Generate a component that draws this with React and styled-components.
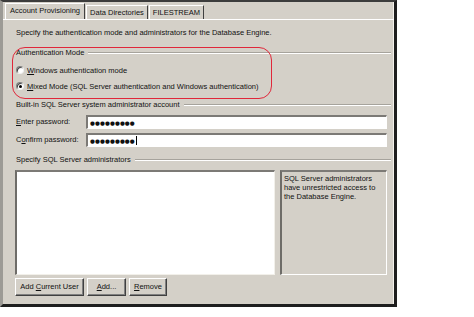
import React from 'react';
import styled, { createGlobalStyle } from 'styled-components';

const Global = createGlobalStyle`
  html, body {
    margin: 0;
    padding: 0;
    background: #ffffff;
  }
  body {
    font-family: "Liberation Sans", Arial, sans-serif;
    font-size: 7.5px;
    color: #111;
  }
  * { box-sizing: border-box; }
`;

const Window = styled.div`
  position: relative;
  width: 397px;
  height: 307px;
  background: #d4d0c8;
  border-left: 3px solid #9c9a95;
  border-top: 2px solid #3c3c3c;
  border-right: 3px solid #1e1e1e;
  border-bottom: 3px solid #1e1e1e;
  box-shadow: inset -1px 0 0 #f4f2ec;
  display: flex;
  flex-direction: column;
`;

const TabStrip = styled.div`
  display: flex;
  align-items: flex-end;
  height: 17px;
  padding-left: 2px;
`;

const Tab = styled.div`
  height: ${p => (p.$active ? '16px' : '14px')};
  padding: 0 ${p => (p.$active ? '4px' : '3px')};
  display: flex;
  align-items: center;
  line-height: 10px;
  border-top: 1px solid #ffffff;
  border-left: 1px solid #ffffff;
  border-right: 1px solid #404040;
  margin-right: 1px;
  background: #d4d0c8;
  padding-bottom: ${p => (p.$active ? '1px' : '0')};
`;

const Panel = styled.div`
  flex: 1;
  border-top: 1px solid #ffffff;
  padding: 0 7px 0 13px;
  display: flex;
  flex-direction: column;
`;

const Text = styled.div`
  line-height: 10px;
  height: 10px;
  margin-top: ${p => p.$mt || 0}px;
  white-space: nowrap;
`;

const GroupHeader = styled.div`
  display: flex;
  align-items: center;
  height: 10px;
  line-height: 10px;
  margin-top: ${p => p.$mt || 0}px;
  margin-right: -4px;
  white-space: nowrap;
`;

const GroupLine = styled.div`
  flex: 1;
  margin-left: 4px;
  height: 2px;
  border-top: 1px solid #a6a39c;
  border-bottom: 1px solid #ffffff;
`;

const RadioRow = styled.div`
  display: flex;
  align-items: center;
  height: 16px;
  margin-top: ${p => p.$mt || 0}px;
`;

const RadioCircle = styled.span`
  width: 8px;
  height: 8px;
  border-radius: 50%;
  background: #ffffff;
  border: 1px solid;
  border-color: #808080 #f0f0f0 #f0f0f0 #808080;
  box-shadow: inset 1px 1px 0 #404040;
  display: flex;
  align-items: center;
  justify-content: center;
  margin-right: 3px;

  &::after {
    content: '';
    width: 3px;
    height: 3px;
    border-radius: 50%;
    background: ${p => (p.$checked ? '#000' : 'transparent')};
  }
`;

const FieldRow = styled.div`
  display: flex;
  align-items: center;
  height: 14px;
  margin-top: ${p => p.$mt || 0}px;
`;

const FieldLabel = styled.div`
  width: 70px;
  line-height: 10px;
`;

const Input = styled.div`
  flex: 1;
  height: 14px;
  background: #ffffff;
  border-top: 2px solid #7c7a76;
  border-left: 2px solid #7c7a76;
  border-bottom: 1px solid #ffffff;
  border-right: 1px solid #ffffff;
  display: flex;
  align-items: center;
  padding-left: 2px;
`;

const Dots = styled.span`
  font-family: "DejaVu Sans", sans-serif;
  font-size: 5.6px;
  line-height: 8px;
  letter-spacing: 0.1px;
`;

const Caret = styled.span`
  width: 1px;
  height: 9px;
  background: #000;
  margin-left: 1px;
`;

const ListArea = styled.div`
  display: flex;
  gap: 5px;
  height: 105px;
  margin-top: 5px;
  margin-left: -1px;
`;

const ListBox = styled.div`
  flex: 1;
  background: #ffffff;
  border-top: 2px solid #7c7a76;
  border-left: 2px solid #6e6c68;
  border-bottom: 1px solid #f2f0ea;
  border-right: 1px solid #f2f0ea;
`;

const InfoBox = styled.div`
  width: 107px;
  background: #d4d0c8;
  border-top: 2px solid #7c7a76;
  border-left: 2px solid #6e6c68;
  border-bottom: 1px solid #ffffff;
  border-right: 1px solid #ffffff;
  padding: 2px 2px;
  line-height: 9px;
`;

const ButtonRow = styled.div`
  display: flex;
  gap: 3px;
  margin-top: 3px;
  margin-left: -1px;
`;

const Button = styled.div`
  width: ${p => p.$w}px;
  height: 18px;
  display: flex;
  align-items: center;
  justify-content: center;
  background: #d4d0c8;
  border-top: 1px solid #ffffff;
  border-left: 1px solid #ffffff;
  border-right: 1px solid #404040;
  border-bottom: 1px solid #404040;
  box-shadow: inset -1px -1px 0 #808080;
  line-height: 10px;
  white-space: pre;
`;

const Annotation = styled.div`
  position: absolute;
  left: 9px;
  top: 45px;
  width: 260px;
  height: 52px;
  border: 1.6px solid #e0273a;
  border-radius: 13px;
  pointer-events: none;
`;

export default function App() {
  return (
    <>
      <Global />
      <Window>
        <TabStrip>
          <Tab $active>Account Provisioning</Tab>
          <Tab>Data Directories</Tab>
          <Tab>FILESTREAM</Tab>
        </TabStrip>
        <Panel>
          <Text $mt={8}>Specify the authentication mode and administrators for the Database Engine.</Text>

          <GroupHeader $mt={10}>
            Authentication Mode
            <GroupLine />
          </GroupHeader>
          <RadioRow $mt={4}>
            <RadioCircle />
            <span><u>W</u>indows authentication mode</span>
          </RadioRow>
          <RadioRow>
            <RadioCircle $checked />
            <span><u>M</u>ixed Mode (SQL Server authentication and Windows authentication)</span>
          </RadioRow>

          <GroupHeader $mt={6}>
            Built-in SQL Server system administrator account
            <GroupLine />
          </GroupHeader>
          <FieldRow $mt={5}>
            <FieldLabel><u>E</u>nter password:</FieldLabel>
            <Input><Dots>●●●●●●●●●</Dots></Input>
          </FieldRow>
          <FieldRow $mt={4}>
            <FieldLabel>C<u>o</u>nfirm password:</FieldLabel>
            <Input><Dots>●●●●●●●●●</Dots><Caret /></Input>
          </FieldRow>

          <GroupHeader $mt={8}>
            Specify SQL Server administrators
            <GroupLine />
          </GroupHeader>
          <ListArea>
            <ListBox />
            <InfoBox>
              SQL Server administrators<br />
              have unrestricted access to<br />
              the Database Engine.
            </InfoBox>
          </ListArea>
          <ButtonRow>
            <Button $w={69}><span>Add <u>C</u>urrent User</span></Button>
            <Button $w={39}><span><u>A</u>dd...</span></Button>
            <Button $w={38}><span><u>R</u>emove</span></Button>
          </ButtonRow>
        </Panel>
        <Annotation />
      </Window>
    </>
  );
}
